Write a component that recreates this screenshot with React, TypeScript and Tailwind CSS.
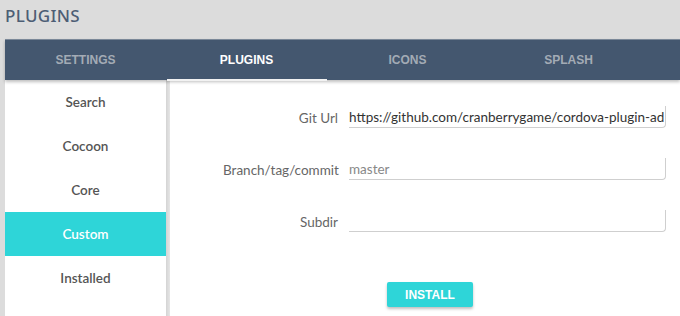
import React from "react";

const tabs = ["SETTINGS", "PLUGINS", "ICONS", "SPLASH"];
const items = ["Search", "Cocoon", "Core", "Custom", "Installed"];

export default function App() {
  return (
    <div className="w-[680px] h-[316px] overflow-hidden bg-[#dcdcdc] flex flex-col" style={{ fontFamily: "Lato, 'Noto Sans', sans-serif" }}>
      <div className="h-[39px] pl-[5px] pt-[3px] text-[17px] text-[#4d5e75] font-medium tracking-[0.3px]" style={{ fontFamily: "'Noto Sans', sans-serif" }}>
        PLUGINS
      </div>
      <div className="ml-[5px] flex-1 flex flex-col min-h-0">
        <div className="h-[41px] bg-[#44576f] border-t border-[#7b8898] flex shadow-[0_2px_3px_rgba(0,0,0,0.25)] relative z-10" style={{ fontFamily: "'Liberation Sans', Arial, sans-serif" }}>
          {tabs.map((t) => (
            <div key={t} className={`w-[161px] flex items-center justify-center text-[12px] font-bold relative ${t === "PLUGINS" ? "text-white" : "text-[#a3abb5]"}`}>
              {t}
              {t === "PLUGINS" && <div className="absolute left-[1px] right-0 bottom-[-1px] h-[2px] bg-[#f2f2f2]" />}
            </div>
          ))}
        </div>
        <div className="flex flex-1 min-h-0">
          <div className="w-[161px] bg-white flex flex-col">
            {items.map((it) => (
              <div key={it} className={`h-[44px] flex items-center justify-center text-[13.5px] font-semibold ${it === "Custom" ? "bg-[#2ed5d8] text-white font-bold" : "text-[#555]"}`}>
                {it}
              </div>
            ))}
          </div>
          <div className="w-[4px] bg-gradient-to-r from-[#d4d4d4] to-[#e6e6e6]" />
          <div className="flex-1 bg-white pl-[53px] pt-[26px] text-[13.5px] flex flex-col gap-[30px]">
            {[
              { label: "Git Url", value: "https://github.com/cranberrygame/cordova-plugin-ad", ph: false },
              { label: "Branch/tag/commit", value: "master", ph: true },
              { label: "Subdir", value: "", ph: false },
            ].map((f) => (
              <div key={f.label} className="flex items-center h-[22px]">
                <div className="w-[115px] text-right text-[#666] pt-[2px]">{f.label}</div>
                <div className="ml-[11px] w-[317px] h-[22px] border-b border-r border-[#cfcfcf] rounded-br-[4px] flex items-center overflow-hidden whitespace-nowrap pt-[2px]">
                  <span className={f.ph ? "text-[#888]" : "text-[#333]"}>{f.value}</span>
                </div>
              </div>
            ))}
            <div className="mt-[20px] ml-[164px]">
              <button className="w-[86px] h-[25px] bg-[#2ed5d8] text-white text-[12px] font-bold rounded-[2px] shadow-[0_2px_3px_rgba(0,0,0,0.25)]" style={{ fontFamily: "'Liberation Sans', Arial, sans-serif" }}>
                INSTALL
              </button>
            </div>
          </div>
        </div>
      </div>
    </div>
  );
}
